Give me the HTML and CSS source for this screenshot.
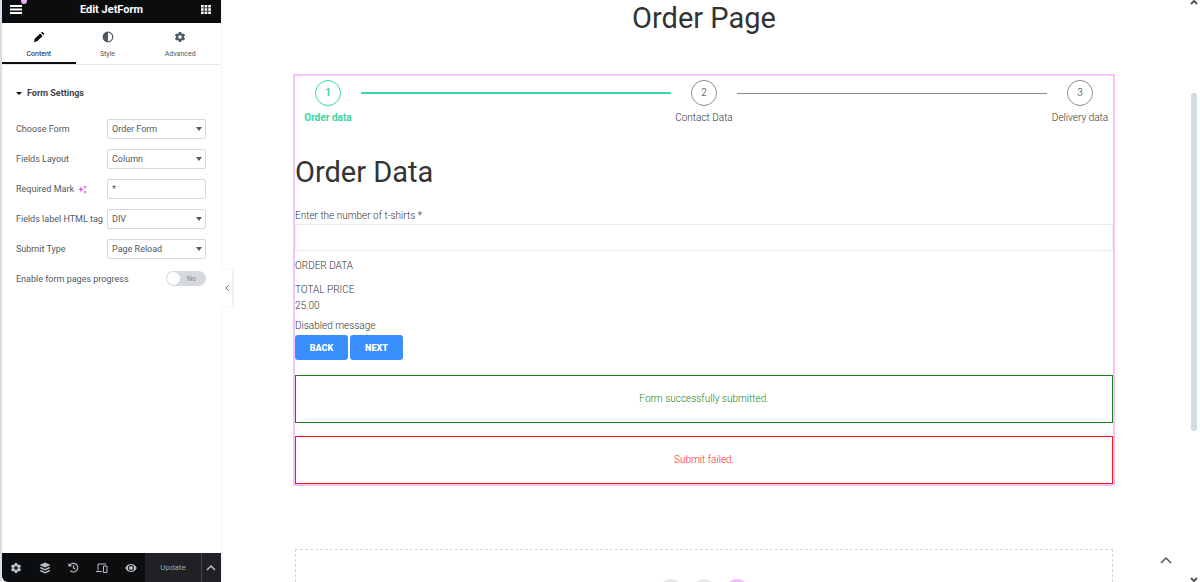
FILE: index.html
```html
<!DOCTYPE html>
<html lang="en">

<head>
    <meta charset="UTF-8">
    <meta name="viewport" content="width=device-width, initial-scale=1.0">
    <title>Order Page</title>
    <link rel="stylesheet" href="styles.css">
</head>

<body>
    <aside class="panel">
        <header class="panel-header">
            <button type="button" class="icon-button menu-button" aria-label="Menu">
                <svg width="12" height="9" viewBox="0 0 12 9"><path d="M0 1h12M0 4.500h12M0 8h12" stroke="currentColor" stroke-width="1.800"/></svg>
                <span class="menu-dot"></span>
            </button>
            <h1 class="panel-title">Edit JetForm</h1>
            <button type="button" class="icon-button" aria-label="Widgets">
                <svg width="10" height="9" viewBox="0 0 10 9" fill="currentColor"><path d="M0 0h2.700v2.500H0zM3.600 0h2.700v2.500H3.600zM7.200 0h2.700v2.500H7.200zM0 3.200h2.700v2.500H0zM3.600 3.200h2.700v2.500H3.600zM7.200 3.200h2.700v2.500H7.200zM0 6.400h2.700v2.500H0zM3.600 6.400h2.700v2.500H3.600zM7.200 6.400h2.700v2.500H7.200z"/></svg>
            </button>
        </header>
        <nav class="tabs">
            <button type="button" class="tab active">
                <svg width="12" height="12" viewBox="0 0 12 12" fill="currentColor"><path d="M1 11l.7-3.200 5.500-5.300 2.400 2.400-5.500 5.400zM8 1.800l.7-.6c.4-.3.800-.3 1.100 0l1.100 1.100c.3.3.3.8 0 1.100l-.6.7z"/></svg>
                Content
            </button>
            <button type="button" class="tab">
                <svg width="12" height="12" viewBox="0 0 12 12"><circle cx="6" cy="6" r="4.800" fill="none" stroke="currentColor" stroke-width="1.200"/><path d="M6 1a5 5 0 0 0 0 10z" fill="currentColor"/></svg>
                Style
            </button>
            <button type="button" class="tab">
                <svg width="12" height="12" viewBox="0 0 24 24" fill="currentColor"><use href="#gear"/></svg>
                Advanced
            </button>
        </nav>
        <form class="controls">
            <h2 class="section-title">Form Settings</h2>
            <div class="control">
                <label for="form">Choose Form</label>
                <div class="select">
                    <select id="form"><option>Order Form</option></select>
                </div>
            </div>
            <div class="control">
                <label for="layout">Fields Layout</label>
                <div class="select">
                    <select id="layout"><option>Column</option><option>Row</option></select>
                </div>
            </div>
            <div class="control">
                <label for="mark">Required Mark
                    <svg class="ai" width="9" height="9" viewBox="0 0 18 18" fill="currentColor"><path d="M6 3l1.600 4.400L12 9l-4.400 1.600L6 15l-1.600-4.400L0 9l4.400-1.600z"/><path d="M14 0l1 3 3 1-3 1-1 3-1-3-3-1 3-1zM14 10l1 3 3 1-3 1-1 3-1-3-3-1 3-1z"/></svg>
                </label>
                <input id="mark" type="text" value="*">
            </div>
            <div class="control">
                <label for="tag">Fields label HTML tag</label>
                <div class="select">
                    <select id="tag"><option>DIV</option><option>LABEL</option></select>
                </div>
            </div>
            <div class="control">
                <label for="submit">Submit Type</label>
                <div class="select">
                    <select id="submit"><option>Page Reload</option><option>AJAX</option></select>
                </div>
            </div>
            <label class="control switch-control">
                Enable form pages progress
                <input type="checkbox" class="switch-input">
                <span class="switch">No</span>
            </label>
        </form>
        <footer class="panel-footer">
            <button type="button" class="tool" aria-label="Settings">
                <svg width="12" height="12" viewBox="0 0 24 24" fill="currentColor"><path id="gear" fill-rule="evenodd" d="M9.500 2h5l.6 3 1.900 1.100 2.900-1 2.300 4-2.300 2v2l2.300 2-2.300 4-2.900-1-1.900 1.100-.6 2.900h-5l-.6-2.900L7 18.100l-2.900 1-2.300-4 2.300-2v-2l-2.300-2 2.300-4 2.900 1L8.900 5zM12 8.500a3.600 3.600 0 1 0 0 7.200 3.600 3.600 0 0 0 0-7.200z"/></svg>
            </button>
            <button type="button" class="tool" aria-label="Navigator">
                <svg width="12" height="12" viewBox="0 0 24 24" fill="currentColor"><path d="M12 1l11 5-11 5L1 6z"/><path d="M4 10l8 4 8-4 3 2-11 5-11-5z"/><path d="M4 16l8 4 8-4 3 2-11 5-11-5z"/></svg>
            </button>
            <button type="button" class="tool" aria-label="History">
                <svg width="11" height="11" viewBox="0 0 24 24" fill="none" stroke="currentColor" stroke-width="2.500"><path d="M4 7a9.500 9.500 0 1 1 1 12M12 7v6l4 2"/><path d="M1 2v8h8z" fill="currentColor" stroke="none"/></svg>
            </button>
            <button type="button" class="tool" aria-label="Responsive mode">
                <svg width="12" height="12" viewBox="0 0 24 24" fill="none" stroke="currentColor" stroke-width="2"><path d="M20 4H4v13M0 19h12M15 8h7v13h-7z"/></svg>
            </button>
            <button type="button" class="tool" aria-label="Preview">
                <svg width="12" height="12" viewBox="0 0 24 24" fill="currentColor"><path fill-rule="evenodd" d="M12 4c5 0 9 3 11.500 8C21 17 17 20 12 20S3 17 .5 12C3 7 7 4 12 4zm0 2a6 6 0 1 0 0 12 6 6 0 0 0 0-12z"/><circle cx="12" cy="12" r="4"/></svg>
            </button>
            <button type="button" class="update">Update</button>
            <button type="button" class="update-more" aria-label="Save options">
                <svg width="10" height="6" viewBox="0 0 10 6"><path d="M1 5l4-4 4 4" fill="none" stroke="currentColor" stroke-width="1.500"/></svg>
            </button>
        </footer>
        <button type="button" class="collapse" aria-label="Hide panel">
            <svg width="4" height="6" viewBox="0 0 4 6"><path d="M3.500 .5L1 3l2.500 2.500" fill="none" stroke="currentColor"/></svg>
        </button>
    </aside>
    <main class="preview">
        <h1 class="page-title">Order Page</h1>
        <form class="jet-form">
            <ol class="steps">
                <li class="step active"><span class="step-number">1</span>Order data</li>
                <li class="step-line active"></li>
                <li class="step"><span class="step-number">2</span>Contact Data</li>
                <li class="step-line"></li>
                <li class="step"><span class="step-number">3</span>Delivery data</li>
            </ol>
            <h2 class="form-title">Order Data</h2>
            <label for="count" class="field-label">Enter the number of t-shirts *</label>
            <input id="count" class="field" type="text">
            <p class="row">ORDER DATA</p>
            <p class="total">TOTAL PRICE<br>25.00</p>
            <p class="disabled-message">Disabled message</p>
            <div class="buttons">
                <button type="button">BACK</button>
                <button type="button">NEXT</button>
            </div>
            <p class="message success">Form successfully submitted.</p>
            <p class="message error">Submit failed.</p>
        </form>
        <section class="add-section">
            <button type="button" class="add" aria-label="Add container"></button>
            <button type="button" class="add" aria-label="Add template"></button>
            <button type="button" class="add ai-add" aria-label="Build with AI"></button>
        </section>
        <a class="to-top" href="#" aria-label="Back to top">
            <svg width="12" height="8" viewBox="0 0 12 8"><path d="M1 7l5-5 5 5" fill="none" stroke="currentColor" stroke-width="1.500"/></svg>
        </a>
    </main>
    <div class="scrollbar">
        <svg width="8" height="5" viewBox="0 0 8 5"><path d="M1 4l3-3 3 3" fill="none" stroke="currentColor" stroke-width="2"/></svg>
        <div class="thumb"></div>
        <svg width="8" height="5" viewBox="0 0 8 5"><path d="M1 1l3 3 3-3" fill="none" stroke="currentColor" stroke-width="2"/></svg>
    </div>
</body>

</html>
```

FILE: styles.css
```css
* {
    box-sizing: border-box;
}

body {
    display: flex;
    height: 100vh;
    margin: 0;
    overflow: hidden;
    font-family: Roboto, "Liberation Sans", sans-serif;
    font-size: 10px;
    color: #333;
    background-color: #fff;
}

h1, h2, p, ol {
    margin: 0;
    padding: 0;
}

button, input, select {
    margin: 0;
    padding: 0;
    border: none;
    font: inherit;
    color: inherit;
    background: none;
}

svg {
    display: block;
}

/* editor panel */
.panel {
    position: relative;
    display: flex;
    flex-direction: column;
    flex: 0 0 221px;
    border-left: 2px solid #d5e1ea;
    font-size: 9px;
    color: #515962;
    box-shadow: 0 0 3px rgba(0, 0, 0, 0.1);
}

.panel-header {
    display: flex;
    align-items: center;
    justify-content: space-between;
    height: 23px;
    padding: 0 10px 5px 8px;
    color: #fff;
    background-color: #0c0d0e;
}

.panel-title {
    font-size: 11px;
    font-weight: 700;
}

.menu-button {
    position: relative;
}

.menu-dot {
    position: absolute;
    top: -7px;
    right: -5px;
    width: 6px;
    height: 6px;
    border-radius: 50%;
    background-color: #f0abfc;
}

.tabs {
    display: grid;
    grid-template-columns: 37fr 32fr 41fr;
    height: 42px;
    border-bottom: 1px solid #e6e8ea;
}

.tab {
    display: flex;
    flex-direction: column;
    align-items: center;
    gap: 7px;
    padding-top: 8px;
    font-size: 7px;
}

.tab.active {
    color: #0c0d0e;
    border-bottom: 2px solid #0c0d0e;
}

.controls {
    display: flex;
    flex-direction: column;
    flex: 1;
    gap: 10px;
    padding: 20px 15px 0 14px;
}

.section-title {
    display: flex;
    align-items: center;
    gap: 5px;
    height: 16px;
    margin-bottom: 8px;
    font-size: 9px;
    font-weight: 700;
    color: #3f444b;
}

.section-title::before {
    content: "";
    border: 3px solid transparent;
    border-top-color: #0c0d0e;
    border-bottom: none;
}

.control {
    display: grid;
    grid-template-columns: 1fr 99px;
    align-items: center;
}

.control > label {
    display: flex;
    align-items: center;
    gap: 4px;
    white-space: nowrap;
}

.ai {
    color: #e34be6;
}

.control select,
.control input[type=text] {
    width: 100%;
    height: 20px;
    padding: 0 4px;
    border: 1px solid #d5d8dc;
    border-radius: 2px;
    appearance: none;
}

.select {
    display: grid;
    align-items: center;
}

.select select,
.select::after {
    grid-area: 1 / 1;
}

.select::after {
    content: "";
    justify-self: end;
    margin-right: 4px;
    border: 3px solid transparent;
    border-top: 4px solid #515962;
    border-bottom: none;
    pointer-events: none;
}

.switch-control {
    grid-template-columns: 1fr 40px;
    padding-top: 2px;
}

.switch-input {
    position: absolute;
    opacity: 0;
}

.switch {
    display: flex;
    align-items: center;
    gap: 7px;
    height: 15px;
    border-radius: 8px;
    font-size: 7px;
    color: #818a96;
    background-color: #d5d8dc;
}

.switch::before {
    content: "";
    width: 13px;
    height: 13px;
    margin-left: 1px;
    border-radius: 50%;
    background-color: #fff;
}

.panel-footer {
    display: flex;
    height: 29px;
    border-bottom-left-radius: 6px;
    color: #babfc5;
    background-color: #0c0d0e;
}

.tool,
.update-more {
    display: grid;
    flex: 1;
    place-items: center;
}

.update {
    width: 56px;
    font-size: 8px;
    color: #9da5ae;
    background-color: #1f2124;
}

.update-more {
    flex: 0 0 20px;
    border-left: 1px solid #3f444b;
    background-color: #1f2124;
}

.collapse {
    position: absolute;
    top: 270px;
    left: 100%;
    display: grid;
    place-items: center;
    width: 11px;
    height: 36px;
    background-color: #fff;
    box-shadow: 1px 0 2px rgba(0, 0, 0, 0.1);
}

/* page preview */
.preview {
    position: relative;
    display: flex;
    flex-direction: column;
    flex: 1;
    padding: 0 73px;
    font-weight: 300;
    line-height: 16px;
}

.page-title,
.form-title {
    font-size: 29px;
    font-weight: 400;
    line-height: 36px;
}

.page-title {
    margin-bottom: 39px;
    text-align: center;
}

.jet-form {
    border: 1px solid #f5c4fa;
    outline: 1px solid #f5c4fa;
}

.steps {
    display: flex;
    padding-top: 4px;
    list-style: none;
}

.step {
    display: flex;
    flex-direction: column;
    align-items: center;
    flex: 0 0 66px;
    gap: 4px;
    white-space: nowrap;
}

.step-number {
    display: grid;
    place-items: center;
    width: 26px;
    height: 26px;
    border: 1px solid #8c8c8c;
    border-radius: 50%;
}

.step.active {
    font-weight: 700;
    color: #3ad8a0;
}

.step.active .step-number {
    border-color: #3ad8a0;
}

.step-line {
    flex: 1;
    height: 1px;
    margin-top: 13px;
    background-color: #8c8c8c;
}

.step-line.active {
    height: 2px;
    margin-top: 12px;
    background-color: #3ad8a0;
}

.form-title {
    margin: 28px 0 18px;
}

.field-label {
    display: block;
}

.field {
    display: block;
    width: 100%;
    height: 27px;
    margin-bottom: 7px;
    padding: 0 8px;
    border: 1px solid #ebebeb;
    border-radius: 2px;
}

.total {
    margin: 8px 0 4px;
}

.buttons {
    display: flex;
    gap: 2px;
    margin: 1px 0 15px;
}

.buttons button {
    width: 53px;
    height: 25px;
    border-radius: 3px;
    font-size: 9px;
    font-weight: 900;
    color: #fff;
    background-color: #398ffc;
}

.message {
    padding: 15px;
    border: 1px solid;
    text-align: center;
}

.success {
    margin-bottom: 13px;
    color: #188318;
}

.error {
    color: #fb1b1b;
}

.add-section {
    display: flex;
    justify-content: center;
    flex: 1;
    gap: 9px;
    min-height: 0;
    margin: 64px 1px 0;
    padding-top: 29px;
    border: 1px dashed #d5d8dc;
    border-bottom: none;
    overflow: hidden;
}

.add {
    width: 24px;
    height: 24px;
    border-radius: 50%;
    background-color: #e6e6e6;
}

.ai-add {
    background-color: #f3bafd;
}

.to-top {
    position: absolute;
    right: 15px;
    bottom: 18px;
    color: #555;
}

.scrollbar {
    display: flex;
    flex-direction: column;
    align-items: center;
    justify-content: space-between;
    flex: 0 0 13px;
    color: #555;
}

.thumb {
    width: 6px;
    height: 58%;
    margin-bottom: 58px;
    border-radius: 3px;
    background-color: #d0dbe4;
}
```
